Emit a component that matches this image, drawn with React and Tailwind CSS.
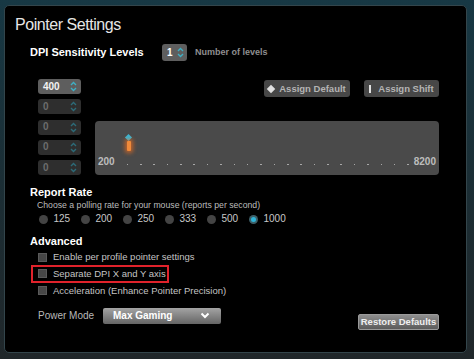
import React from "react";

const F = { fontFamily: '"Liberation Sans", Arial, sans-serif' };

function Arrows({ dim }) {
  return (
    <svg width="7" height="11" viewBox="0 0 7 11" className="shrink-0">
      <path d="M1 4 L3.5 1.5 L6 4" fill="none" stroke={dim ? "#2d6b78" : "#3fb0c4"} strokeWidth="1.4" />
      <path d="M1 7 L3.5 9.5 L6 7" fill="none" stroke={dim ? "#2d6b78" : "#3fb0c4"} strokeWidth="1.4" />
    </svg>
  );
}

function DpiBox({ value, active }) {
  return (
    <div
      className={`h-[15px] w-[43px] rounded-[3px] flex items-center justify-between pl-[5px] pr-[4px] ${
        active ? "bg-[#5e5e5e]" : "bg-[#2e2e2e]"
      }`}
    >
      <span className={`text-[10px] font-bold leading-none ${active ? "text-[#f2f2f2]" : "text-[#6c6c6c]"}`}>{value}</span>
      <Arrows dim={!active} />
    </div>
  );
}

function Radio({ label, checked }) {
  return (
    <div className="w-[42px] flex items-center gap-[6px]">
      <div
        className={`w-[9px] h-[9px] rounded-full flex items-center justify-center ${
          checked ? "bg-[#3e5f68]" : "bg-[#444444]"
        }`}
      >
        {checked && <div className="w-[5px] h-[5px] rounded-full bg-[#2fb4d8]" />}
      </div>
      <span className="text-[10px] leading-none text-[#c8c8c8]">{label}</span>
    </div>
  );
}

function Check({ label }) {
  return (
    <div className="flex items-center gap-[6px]">
      <div className="w-[9px] h-[9px] bg-[#474747] border border-[#5a5a5a]" />
      <span className="text-[9.5px] leading-none text-[#c4c4c4]">{label}</span>
    </div>
  );
}

export default function App() {
  const dots = Array.from({ length: 22 });
  return (
    <div
      style={F}
      className="w-[474px] h-[359px] bg-gradient-to-b from-[#173844] via-[#1b2e35] to-[#20272a] pl-[4px] pt-[5px] pr-[7px] pb-[6px]"
    >
      <div className="h-[348px] w-[463px] rounded-[5px] border border-[#33454b] bg-black pt-[8.5px] flex flex-col">
        {/* Title */}
        <div className="ml-[10px] text-[16px] leading-[20px] tracking-[-0.45px] text-[#e6e6e6] h-[20px]">Pointer Settings</div>

        {/* DPI levels row */}
        <div className="mt-[9.5px] h-[17px] flex items-center">
          <div className="ml-[25px] w-[132px] text-[11px] font-bold text-white leading-none">DPI Sensitivity Levels</div>
          <div className="w-[25px] h-[17px] rounded-[3px] bg-[#5e5e5e] flex items-center justify-between pl-[5px] pr-[3px]">
            <span className="text-[10px] font-bold text-white leading-none">1</span>
            <Arrows />
          </div>
          <span className="ml-[8px] text-[9px] font-bold text-[#8f8f8f] leading-none">Number of levels</span>
        </div>

        {/* DPI area */}
        <div className="mt-[18px] flex">
          <div className="ml-[33px] flex flex-col gap-[5.25px]">
            <DpiBox value="400" active />
            <DpiBox value="0" />
            <DpiBox value="0" />
            <DpiBox value="0" />
            <DpiBox value="0" />
          </div>
          <div className="ml-[14px] w-[344px] flex flex-col">
            <div className="mt-[1px] h-[17px] flex justify-end gap-[14px]">
              <div className="w-[86px] h-[17px] rounded-[3px] bg-[#474747] flex items-center justify-center gap-[5px]">
                <div className="w-[6px] h-[6px] bg-[#e0e0e0] rotate-45" />
                <span className="text-[9.5px] font-bold text-[#b4b4b4] leading-none">Assign Default</span>
              </div>
              <div className="w-[75px] h-[17px] rounded-[3px] bg-[#474747] flex items-center justify-center gap-[7px]">
                <div className="w-[2px] h-[8px] bg-[#e0e0e0]" />
                <span className="text-[9.5px] font-bold text-[#b4b4b4] leading-none">Assign Shift</span>
              </div>
            </div>
            <div className="mt-[24px] h-[54px] rounded-[4px] bg-[#4a4a4a] relative flex items-end pb-[8px] pl-[3px] pr-[3px]">
              <div className="absolute left-[31px] top-[14px] w-[5px] h-[5px] bg-[#37b6d6] rotate-45" />
              <div className="absolute left-[31.5px] top-[20px] w-[4px] h-[10px] rounded-[1px] bg-[#f08a3a] shadow-[0_0_4px_2px_rgba(240,110,30,0.7)]" />
              <span className="text-[10px] font-bold text-[#bdbdbd] leading-none">200</span>
              <div className="ml-[12px] w-[286px] flex justify-between items-center mb-[2px]">
                {dots.map((_, i) => (
                  <div key={i} className="w-[1.5px] h-[1.5px] bg-[#a8a8a8]" />
                ))}
              </div>
              <span className="ml-[5px] text-[10px] font-bold text-[#bdbdbd] leading-none">8200</span>
            </div>
          </div>
        </div>

        {/* Report rate */}
        <div className="mt-[10px] ml-[25px] text-[11px] leading-[14px] font-bold text-white">Report Rate</div>
        <div className="ml-[32px] text-[8.7px] leading-[12px] text-[#bcbcbc]">Choose a polling rate for your mouse (reports per second)</div>
        <div className="mt-[2px] ml-[33.5px] h-[12px] flex items-center">
          <Radio label="125" />
          <Radio label="200" />
          <Radio label="250" />
          <Radio label="333" />
          <Radio label="500" />
          <Radio label="1000" checked />
        </div>

        {/* Advanced */}
        <div className="mt-[9px] ml-[25px] text-[11px] leading-[14px] font-bold text-white">Advanced</div>
        <div className="mt-[1px] ml-[26px] flex flex-col">
          <div className="h-[16px] flex items-center pl-[7px]">
            <Check label="Enable per profile pointer settings" />
          </div>
          <div className="h-[17.5px] w-[138px] border-2 border-[#e0222b] flex items-center pl-[5px]">
            <Check label="Separate DPI X and Y axis" />
          </div>
          <div className="h-[16px] flex items-center pl-[7px]">
            <Check label="Acceleration (Enhance Pointer Precision)" />
          </div>
        </div>

        {/* Power mode */}
        <div className="mt-[9px] flex items-start">
          <div className="ml-[33px] h-[16px] flex items-center">
            <span className="w-[65px] text-[10px] text-[#b8b8b8] leading-none">Power Mode</span>
            <div className="w-[118px] h-[16px] rounded-[2px] bg-gradient-to-b from-[#a4a4a4] to-[#656565] flex items-center justify-between pl-[10px] pr-[11px]">
              <span className="text-[10px] font-bold text-white leading-none">Max Gaming</span>
              <svg width="10" height="7" viewBox="0 0 10 7">
                <path d="M1.5 1.5 L5 5 L8.5 1.5" fill="none" stroke="#fff" strokeWidth="2" />
              </svg>
            </div>
          </div>
          <div className="ml-auto mr-[27px] mt-[6px] w-[81px] h-[16px] rounded-[2px] border border-[#9a9a9a] bg-gradient-to-b from-[#8e8e8e] to-[#5c5c5c] flex items-center justify-center">
            <span className="text-[9.5px] font-bold text-[#efefef] leading-none">Restore Defaults</span>
          </div>
        </div>
      </div>
    </div>
  );
}
